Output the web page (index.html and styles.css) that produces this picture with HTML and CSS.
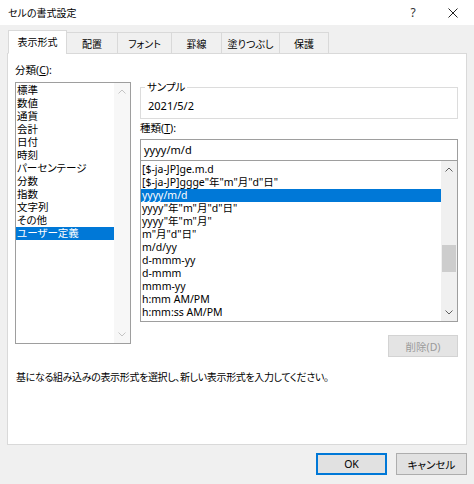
FILE: index.html
```html
<!DOCTYPE html>
<html lang="ja">
<head>
<meta charset="utf-8">
<title>セルの書式設定</title>
<link rel="stylesheet" href="styles.css">
</head>
<body>
<div class="window">
  <div class="titlebar">
    <span class="title">セルの書式設定</span>
    <div class="tb-btns">
      <span class="tb-btn help">?</span>
      <span class="tb-btn close"><svg width="10" height="10" viewBox="0 0 10 10"><path d="M0.5 0.5L9.5 9.5M9.5 0.5L0.5 9.5" stroke="#222" stroke-width="1" fill="none"/></svg></span>
    </div>
  </div>

  <div class="tabs">
    <div class="tab active w1">表示形式</div>
    <div class="tab w2">配置</div>
    <div class="tab w3">フォント</div>
    <div class="tab w4">罫線</div>
    <div class="tab w5">塗りつぶし</div>
    <div class="tab w6">保護</div>
  </div>

  <div class="panel">
    <div class="cols">
      <div class="col-left">
        <div class="label">分類(<u>C</u>):</div>
        <div class="listbox cat">
          <ul class="items">
            <li>標準</li>
            <li>数値</li>
            <li>通貨</li>
            <li>会計</li>
            <li>日付</li>
            <li>時刻</li>
            <li>パーセンテージ</li>
            <li>分数</li>
            <li>指数</li>
            <li>文字列</li>
            <li>その他</li>
            <li class="sel">ユーザー定義</li>
          </ul>
          <div class="sbar dis">
            <div class="arrow"><svg width="8" height="5" viewBox="0 0 8 5"><path d="M0.5 4.5L4 1L7.5 4.5" stroke="#c4c4c4" fill="none"/></svg></div>
            <div class="track"></div>
            <div class="arrow"><svg width="8" height="5" viewBox="0 0 8 5"><path d="M0.5 0.5L4 4L7.5 0.5" stroke="#c4c4c4" fill="none"/></svg></div>
          </div>
        </div>
      </div>

      <div class="col-right">
        <fieldset class="sample">
          <legend>サンプル</legend>
          <div class="sample-val">2021/5/2</div>
        </fieldset>
        <div class="label kind">種類(<u>T</u>):</div>
        <div class="input">yyyy/m/d</div>
        <div class="listbox fmt">
          <ul class="items">
            <li>[$-ja-JP]ge.m.d</li>
            <li>[$-ja-JP]ggge"年"m"月"d"日"</li>
            <li class="sel">yyyy/m/d</li>
            <li>yyyy"年"m"月"d"日"</li>
            <li>yyyy"年"m"月"</li>
            <li>m"月"d"日"</li>
            <li>m/d/yy</li>
            <li>d-mmm-yy</li>
            <li>d-mmm</li>
            <li>mmm-yy</li>
            <li>h:mm AM/PM</li>
            <li>h:mm:ss AM/PM</li>
          </ul>
          <div class="sbar">
            <div class="arrow"><svg width="8" height="5" viewBox="0 0 8 5"><path d="M0.5 4.5L4 1L7.5 4.5" stroke="#606060" fill="none"/></svg></div>
            <div class="track"><div class="thumb"></div></div>
            <div class="arrow"><svg width="8" height="5" viewBox="0 0 8 5"><path d="M0.5 0.5L4 4L7.5 0.5" stroke="#606060" fill="none"/></svg></div>
          </div>
        </div>
        <div class="del-row"><button class="btn disabled">削除(D)</button></div>
      </div>
    </div>
    <p class="desc">基になる組み込みの表示形式を選択し、新しい表示形式を入力してください。</p>
  </div>

  <div class="footer">
    <button class="btn default">OK</button>
    <button class="btn">キャンセル</button>
  </div>
</div>
</body>
</html>
```

FILE: styles.css
```css
* { box-sizing: border-box; }

html, body {
  margin: 0;
  padding: 0;
}

body {
  width: 474px;
  height: 484px;
  overflow: hidden;
  background: #f0f0f0;
  font-family: "Noto Sans", "Noto Sans CJK JP", sans-serif;
  font-feature-settings: "palt";
  font-size: 10.5px;
  color: #000;
}

.window {
  width: 474px;
  height: 484px;
}

/* title bar */
.titlebar {
  height: 25px;
  background: #fff;
  display: flex;
  align-items: center;
  padding-left: 8px;
}

.title {
  font-size: 10px;
  line-height: 14px;
}

.tb-btns {
  margin-left: auto;
  display: flex;
  padding-right: 1px;
}

.tb-btn {
  width: 40px;
  height: 25px;
  display: flex;
  align-items: center;
  justify-content: center;
  font-size: 12px;
  color: #333;
}

/* tabs */
.tabs {
  display: flex;
  align-items: flex-end;
  height: 24px;
  margin-top: 5px;
  margin-bottom: -1px;
  padding-left: 8px;
  position: relative;
  z-index: 1;
}

.tab {
  height: 22px;
  border: 1px solid #d9d9d9;
  background: #f0f0f0;
  display: flex;
  align-items: center;
  justify-content: center;
  font-size: 10px;
  margin-left: -1px;
}

.tab:first-child { margin-left: 0; }

.tab.active {
  height: 24px;
  background: #fff;
  border-bottom-color: #fff;
  padding-bottom: 2px;
}

.w1 { width: 59px; }
.w2 { width: 52px; }
.w3 { width: 55px; }
.w4 { width: 51px; }
.w5 { width: 59px; }
.w6 { width: 50px; }

/* main panel */
.panel {
  margin-left: 7px;
  width: 460px;
  height: 392px;
  border: 1px solid #d9d9d9;
  background: #fff;
  padding: 9px 0 0 7px;
}

.cols {
  display: grid;
  grid-template-columns: 116px 318px;
  column-gap: 9px;
  align-items: start;
}

.label {
  height: 14px;
  line-height: 14px;
  font-size: 10.5px;
}

.label u { text-underline-offset: 1px; }

.listbox {
  border: 1px solid #9e9e9e;
  background: #fff;
  display: flex;
}

.items {
  list-style: none;
  margin: 0;
  padding: 1px 0 0;
  flex: 1;
}

.items li {
  height: 13px;
  line-height: 13px;
  padding-left: 1px;
  white-space: nowrap;
  overflow: hidden;
}

.items li.sel {
  background: #0078d7;
  color: #fff;
}

.listbox.cat {
  margin-top: 5px;
  height: 262px;
  font-size: 10.5px;
}

.listbox.fmt {
  margin-top: -1px;
  height: 162px;
  font-size: 10.5px;
}

.listbox.fmt .items { padding-top: 2px; }

.sbar {
  width: 16px;
  display: flex;
  flex-direction: column;
  background: #f0f0f0;
}

.sbar.dis { background: #f7f7f7; }

.sbar .arrow {
  height: 17px;
  display: flex;
  align-items: center;
  justify-content: center;
}

.sbar .track {
  flex: 1;
  padding-top: 67px;
}

.sbar .thumb {
  margin: 0 1px;
  height: 27px;
  background: #cdcdcd;
}

/* right column */
.sample {
  margin: 17px 0 0;
  padding: 0 0 5px 4px;
  border: 1px solid #dcdcdc;
  min-width: 0;
}

.sample legend {
  padding: 0 2px;
  line-height: 14px;
  font-size: 10.5px;
}

.sample-val {
  margin-top: 5px;
  padding-left: 3px;
  line-height: 14px;
  font-size: 11px;
}

.label.kind {
  margin-top: 2px;
}

.input {
  margin-top: 4px;
  height: 22px;
  border: 1px solid #9e9e9e;
  padding-left: 3px;
  line-height: 20px;
  font-size: 11px;
}

.del-row {
  margin-top: 13px;
  display: flex;
  justify-content: flex-end;
}

.btn {
  font-family: inherit;
  font-feature-settings: "palt";
  font-size: 10.5px;
  width: 71px;
  height: 22px;
  padding: 0;
  background: #e1e1e1;
  border: 1px solid #adadad;
  color: #000;
}

.btn.disabled {
  width: 70px;
  background: #e4e4e4;
  border-color: #d3d3d3;
  color: #9a9a9a;
}

.btn.default {
  border-color: #0078d7;
  box-shadow: inset 0 0 0 1px #0078d7;
}

.desc {
  margin: 13px 0 0 1px;
  line-height: 14px;
  font-size: 10px;
  letter-spacing: -0.35px;
}

/* footer */
.footer {
  display: flex;
  justify-content: flex-end;
  gap: 9px;
  padding: 8px 7px 0 0;
}
```
